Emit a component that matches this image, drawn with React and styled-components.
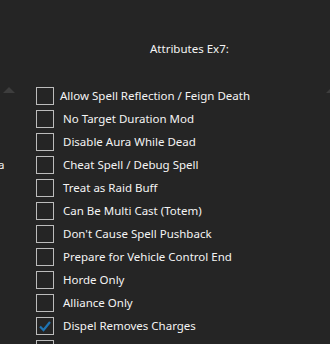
import React from "react";
import styled, { createGlobalStyle } from "styled-components";

const Global = createGlobalStyle`
  html, body { margin: 0; padding: 0; background: #252525; }
  body { font-family: "Noto Sans", "Open Sans", sans-serif; }
`;

const Page = styled.div`
  width: 330px;
  height: 344px;
  overflow: hidden;
  display: flex;
  background: #252525;
  color: #f4f4f4;
  font-size: 11.5px;
`;

const SidePane = styled.div`
  width: ${(p) => p.$w}px;
  flex: none;
  overflow: hidden;
  display: flex;
  flex-direction: column;
  align-items: flex-start;
  padding-top: 87px;
  padding-left: ${(p) => p.$pl || 0}px;
  box-sizing: border-box;
`;

const UpArrow = styled.div`
  width: 0;
  height: 0;
  border-left: 6px solid transparent;
  border-right: 6px solid transparent;
  border-bottom: 6px solid #3d3d3d;
`;

const ClippedText = styled.span`
  margin-top: 64px;
  margin-left: -5px;
  line-height: 16px;
  white-space: nowrap;
`;

const Main = styled.div`
  flex: 1;
  display: flex;
  flex-direction: column;
  padding-left: 16px;
`;

const Title = styled.div`
  margin-top: 40px;
  padding-left: 114px;
  height: 18px;
  line-height: 18px;
  white-space: nowrap;
`;

const List = styled.div`
  margin-top: 29px;
  display: flex;
  flex-direction: column;
  gap: 5px;
`;

const Row = styled.div`
  display: flex;
  align-items: center;
  height: 18px;
  white-space: nowrap;
`;

const Box = styled.span`
  width: 18px;
  height: 18px;
  box-sizing: border-box;
  border: 1px solid #bcbcbc;
  flex: none;
  display: flex;
  align-items: center;
  justify-content: center;
`;

const Label = styled.span`
  margin-left: ${(p) => (p.$first ? 6 : 9)}px;
  line-height: 18px;
`;

const items = [
  ["Allow Spell Reflection / Feign Death", false],
  ["No Target Duration Mod", false],
  ["Disable Aura While Dead", false],
  ["Cheat Spell / Debug Spell", false],
  ["Treat as Raid Buff", false],
  ["Can Be Multi Cast (Totem)", false],
  ["Don't Cause Spell Pushback", false],
  ["Prepare for Vehicle Control End", false],
  ["Horde Only", false],
  ["Alliance Only", false],
  ["Dispel Removes Charges", true],
];

const Check = () => (
  <svg width="14" height="14" viewBox="0 0 14 14">
    <path d="M2 7.5 L5.5 11 L12 3" fill="none" stroke="#1f74b3" strokeWidth="2.2" />
  </svg>
);

export default function App() {
  return (
    <>
      <Global />
      <Page>
        <SidePane $w={20} $pl={3}>
          <UpArrow />
          <ClippedText>a</ClippedText>
        </SidePane>
        <Main>
          <Title>Attributes Ex7:</Title>
          <List>
            {items.map(([t, c], i) => (
              <Row key={t}>
                <Box>{c && <Check />}</Box>
                <Label $first={i === 0}>{t}</Label>
              </Row>
            ))}
            <Row>
              <Box />
            </Row>
          </List>
        </Main>
        <SidePane $w={4}>
          <UpArrow />
        </SidePane>
      </Page>
    </>
  );
}
